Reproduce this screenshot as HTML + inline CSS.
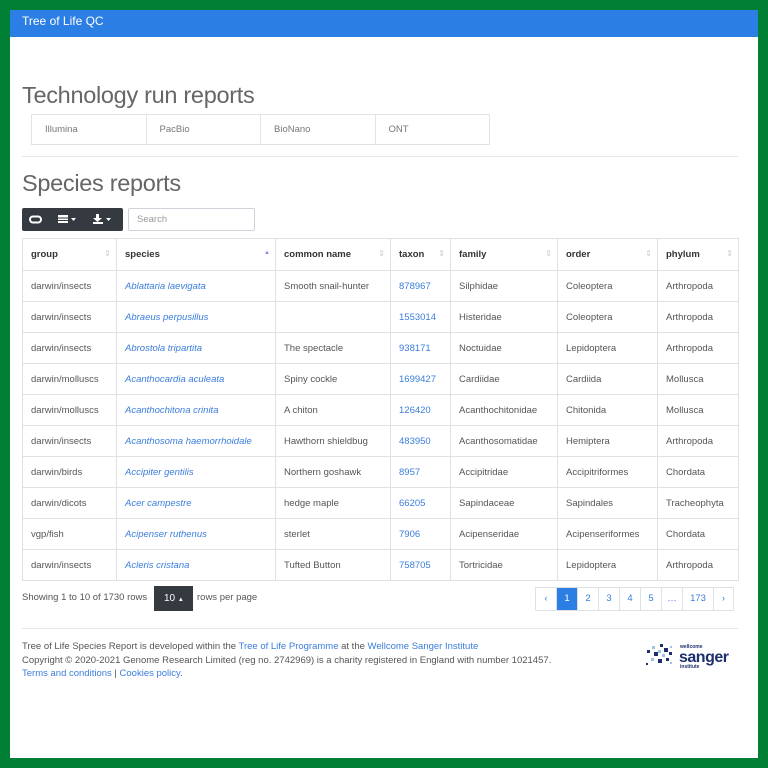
<!DOCTYPE html>
<html><head><meta charset="utf-8"><style>
*{margin:0;padding:0;box-sizing:border-box}
body{width:768px;height:768px;background:#018035;font-family:"Liberation Sans",sans-serif;position:relative;overflow:hidden;color:#444}
.page{position:absolute;left:10px;top:10px;width:748px;height:748px;background:#fff}
.nav{position:absolute;left:10px;top:10px;width:748px;height:27px;background:#2b7ee3;color:#fff;font-size:12px;line-height:22px;padding-left:12px}
.a{position:absolute}
h1{position:absolute;font-weight:normal;font-size:23.5px;color:#666;letter-spacing:-0.3px}
.tabs{left:31px;top:114px;width:459px;height:31px;border:1px solid #e3e3e3;display:flex}
.tabs div{flex:1;border-right:1px solid #e3e3e3;font-size:9.5px;color:#777;line-height:29px;padding-left:13px}
.tabs div:last-child{border-right:none}
.hr{left:22px;width:716px;height:1px;background:#e6e6e6}
table{position:absolute;left:22px;top:238px;width:716px;border-collapse:collapse;font-size:9.5px;table-layout:fixed}
td,th{border:1px solid #dee2e6;height:31px;padding:0 8px;text-align:left;white-space:nowrap;overflow:hidden}
th{font-weight:bold;color:#333;position:relative;height:32px}
th:after{content:"⇕";position:absolute;right:5px;top:10px;color:#ccc;font-size:8px;font-weight:normal}
th.s:after{content:"▲";color:#8a8ade;font-size:6px;top:11px}
td{color:#555}
td.l{color:#3b7ddd}
td i{color:#3b7ddd}
.pg{position:absolute;left:535px;top:587px;display:flex;border:1px solid #dee2e6;height:24px}
.pg div{height:22px;line-height:22px;font-size:9.5px;color:#3b7ddd;text-align:center;border-left:1px solid #dee2e6;width:21px}
.pg div:first-child{border-left:none;width:20px}
.pg .on{background:#2b7ee3;color:#fff}
.f{font-size:9.5px;color:#555;line-height:13.5px}
.f span{color:#3b7ddd}
</style></head><body>
<div class="page"></div>
<div class="nav">Tree of Life QC</div>
<h1 style="left:22px;top:82px">Technology run reports</h1>
<div class="a tabs"><div>Illumina</div><div>PacBio</div><div>BioNano</div><div>ONT</div></div>
<div class="a hr" style="top:156px"></div>
<h1 style="left:22px;top:170px">Species reports</h1>
<div class="a" style="left:22px;top:208px;width:101px;height:23px;background:#343a40;border-radius:2px;color:#fff;font-size:9px">
<svg width="101" height="23" style="position:absolute;left:0;top:0"><rect x="8" y="8.5" width="11" height="6" rx="3" fill="none" stroke="#fff" stroke-width="2"/><g fill="#fff"><rect x="36" y="7" width="10" height="8"/><path d="M49 10h5l-2.5 3z"/><path d="M74 6h3v4h3l-4.5 4-4.5-4h3z"/><rect x="71" y="14" width="10" height="2"/><path d="M84 10h5l-2.5 3z"/></g><g stroke="#343a40" stroke-width="1"><line x1="36" y1="10" x2="46" y2="10"/><line x1="36" y1="12.5" x2="46" y2="12.5"/></g></svg></div>
<div class="a" style="left:128px;top:208px;width:127px;height:23px;border:1px solid #ced4da;border-radius:2px;font-size:9.5px;color:#999;padding:5px 8px">Search</div>
<table>
<colgroup><col style="width:94px"><col style="width:159px"><col style="width:115px"><col style="width:60px"><col style="width:107px"><col style="width:100px"><col style="width:81px"></colgroup>
<tr><th>group</th><th class="s">species</th><th>common name</th><th>taxon</th><th>family</th><th>order</th><th>phylum</th></tr>
<tr><td>darwin/insects</td><td><i>Ablattaria laevigata</i></td><td>Smooth snail-hunter</td><td class="l">878967</td><td>Silphidae</td><td>Coleoptera</td><td>Arthropoda</td></tr>
<tr><td>darwin/insects</td><td><i>Abraeus perpusillus</i></td><td></td><td class="l">1553014</td><td>Histeridae</td><td>Coleoptera</td><td>Arthropoda</td></tr>
<tr><td>darwin/insects</td><td><i>Abrostola tripartita</i></td><td>The spectacle</td><td class="l">938171</td><td>Noctuidae</td><td>Lepidoptera</td><td>Arthropoda</td></tr>
<tr><td>darwin/molluscs</td><td><i>Acanthocardia aculeata</i></td><td>Spiny cockle</td><td class="l">1699427</td><td>Cardiidae</td><td>Cardiida</td><td>Mollusca</td></tr>
<tr><td>darwin/molluscs</td><td><i>Acanthochitona crinita</i></td><td>A chiton</td><td class="l">126420</td><td>Acanthochitonidae</td><td>Chitonida</td><td>Mollusca</td></tr>
<tr><td>darwin/insects</td><td><i>Acanthosoma haemorrhoidale</i></td><td>Hawthorn shieldbug</td><td class="l">483950</td><td>Acanthosomatidae</td><td>Hemiptera</td><td>Arthropoda</td></tr>
<tr><td>darwin/birds</td><td><i>Accipiter gentilis</i></td><td>Northern goshawk</td><td class="l">8957</td><td>Accipitridae</td><td>Accipitriformes</td><td>Chordata</td></tr>
<tr><td>darwin/dicots</td><td><i>Acer campestre</i></td><td>hedge maple</td><td class="l">66205</td><td>Sapindaceae</td><td>Sapindales</td><td>Tracheophyta</td></tr>
<tr><td>vgp/fish</td><td><i>Acipenser ruthenus</i></td><td>sterlet</td><td class="l">7906</td><td>Acipenseridae</td><td>Acipenseriformes</td><td>Chordata</td></tr>
<tr><td>darwin/insects</td><td><i>Acleris cristana</i></td><td>Tufted Button</td><td class="l">758705</td><td>Tortricidae</td><td>Lepidoptera</td><td>Arthropoda</td></tr>
</table>
<div class="a" style="left:22px;top:592px;font-size:9.5px;color:#555">Showing 1 to 10 of 1730 rows</div>
<div class="a" style="left:154px;top:586px;width:39px;height:25px;background:#343a40;color:#fff;font-size:10px;line-height:25px;padding-left:10px">10 <span style="font-size:6px">▲</span></div>
<div class="a" style="left:197px;top:592px;font-size:9.5px;color:#555">rows per page</div>
<div class="pg"><div>‹</div><div class="on">1</div><div>2</div><div>3</div><div>4</div><div>5</div><div>…</div><div style="width:31px">173</div><div style="width:20px">›</div></div>
<div class="a hr" style="top:628px"></div>
<div class="a f" style="left:22px;top:640px">Tree of Life Species Report is developed within the <span>Tree of Life Programme</span> at the <span>Wellcome Sanger Institute</span><br>Copyright © 2020-2021 Genome Research Limited (reg no. 2742969) is a charity registered in England with number 1021457.<br><span>Terms and conditions</span> | <span>Cookies policy</span>.</div>
<svg class="a" style="left:644px;top:638px" width="96" height="34">
<g fill="#1f2f6e"><rect x="3" y="12" width="3" height="3"/><rect x="10" y="14" width="4" height="4"/><rect x="16" y="6" width="3" height="3"/><rect x="20" y="10" width="4" height="4"/><rect x="14" y="21" width="4" height="4"/><rect x="22" y="20" width="3" height="3"/><rect x="2" y="25" width="2" height="2"/><rect x="25" y="14" width="3" height="3"/></g>
<g fill="#9fc6e0"><rect x="8" y="8" width="3" height="3"/><rect x="14" y="12" width="3" height="3"/><rect x="18" y="16" width="3" height="3"/><rect x="26" y="8" width="2" height="2"/><rect x="26" y="24" width="2" height="2"/><rect x="7" y="20" width="3" height="3"/></g>
<text x="36" y="10" font-size="5" font-weight="bold" fill="#1f2f6e" font-family="Liberation Sans">wellcome</text>
<text x="35" y="24" font-size="16" font-weight="bold" fill="#1f2f6e" font-family="Liberation Sans" letter-spacing="-0.5">sanger</text>
<text x="36" y="30" font-size="5" font-weight="bold" fill="#1f2f6e" font-family="Liberation Sans">institute</text>
</svg>
</body></html>
